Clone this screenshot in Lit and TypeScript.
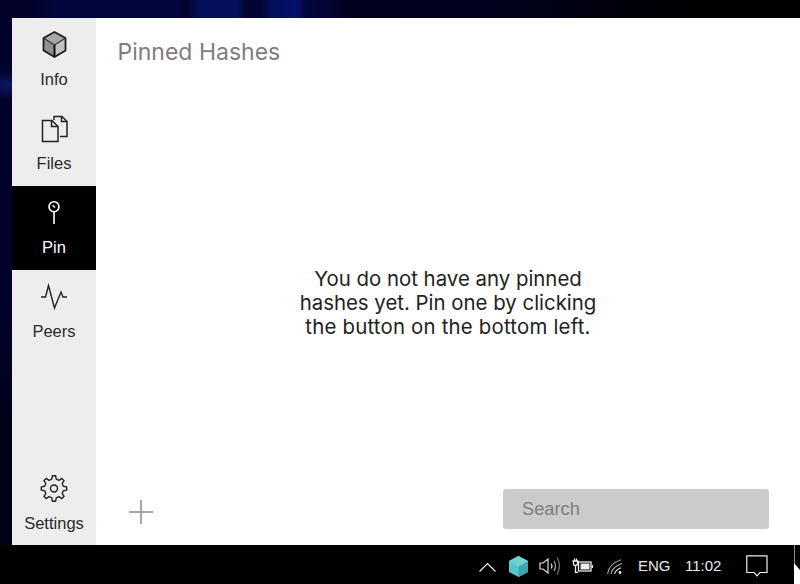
import { LitElement, html, css, svg } from "lit";
import { customElement } from "lit/decorators.js";

function gearPath(cx: number, cy: number, outer: number, inner: number, teeth: number) {
  const pts: string[] = [];
  const step = (Math.PI * 2) / teeth;
  for (let i = 0; i < teeth; i++) {
    const a = i * step - Math.PI / 2;
    const at = (r: number, t: number) => {
      const th = a + t * step;
      return `${(cx + r * Math.cos(th)).toFixed(2)} ${(cy + r * Math.sin(th)).toFixed(2)}`;
    };
    pts.push(at(inner, -0.3), at(outer, -0.16), at(outer, 0.16), at(inner, 0.3));
  }
  return "M" + pts.join("L") + "Z";
}

const icons = {
  info: svg`<svg class="ico" viewBox="0 0 28 28" width="28" height="28"><path d="M14.5 1 25.5 7V19.5L14.5 26 3.5 19.5V7Z" fill="#a8a8a8"/><path d="M14.5 14 3.5 7V19.5L14.5 26Z" fill="#8f8f8f"/><path d="M14.5 14 25.5 7V19.5L14.5 26Z" fill="#c2c2c2"/><path d="M14.5 1 25.5 7V19.5L14.5 26 3.5 19.5V7Z" fill="none" stroke="#1c1c1c" stroke-width="1.8" stroke-linejoin="round"/><path d="M3.5 7 14.5 14 25.5 7" fill="none" stroke="#333" stroke-width="1.2"/><path d="M14.5 14V26" fill="none" stroke="#111" stroke-width="2"/></svg>`,
  files: svg`<svg class="ico" viewBox="0 0 28 28" width="28" height="28" fill="none" stroke="#222" stroke-width="1.5"><path d="M2.5 5.5H12L18 11.5V26.5H2.5Z"/><path d="M11.5 5.5V11.5H18"/><path d="M14 5V1.5H22L27 6.5V21.5H20"/><path d="M21.5 1.5V6.5H27"/></svg>`,
  pin: svg`<svg class="ico" viewBox="0 0 28 28" width="28" height="28" fill="none" stroke="#fff" stroke-width="1.6"><circle cx="14" cy="7.7" r="5"/><path d="M14 12.7V25"/><path d="M12.6 6.2 15 8.5" stroke-width="1.4"/></svg>`,
  peers: svg`<svg class="ico" viewBox="0 0 28 28" width="28" height="28" fill="none" stroke="#222" stroke-width="1.4"><path d="M1 14H5.5L8.5 2.5 14.5 25 21 9 23 14H27"/></svg>`,
  settings: svg`<svg class="ico" viewBox="0 0 28 28" width="28" height="28" fill="none" stroke="#222" stroke-width="1.4" stroke-linejoin="round"><circle cx="14" cy="14.5" r="3.5"/><path d="${gearPath(14, 14.5, 12.8, 9.6, 8)}"/></svg>`,
};

@customElement("app-root")
export class AppRoot extends LitElement {
  static styles = css`
    :host { display: block; width: 800px; height: 584px; overflow: hidden; position: relative;
      background:
        radial-gradient(ellipse 30px 16px at 6px 85px, #0a1660 0, transparent 100%),
        linear-gradient(180deg, transparent 0, transparent 300px, #01011a 420px),
        linear-gradient(90deg, #02022a 0, #02022c 33px, #03063c 60px, #03063c 178px, #01022a 186px, #050e58 200px, #050e5c 238px, #02052e 245px, #020636 262px, #040d5e 272px, #051068 298px, #030640 305px, #030436 328px, #01011e 345px, #01011a 520px, #000 720px); }
    * { box-sizing: border-box; }
    .page { display: flex; flex-direction: column; height: 100%; padding-top: 18px; }
    .window { display: flex; flex: none; height: 527px; margin-left: 12px; background: #fff; }
    .side { width: 84px; flex: none; background: #ededed; display: flex; flex-direction: column; }
    .item { height: 84px; display: flex; flex-direction: column; align-items: center; color: #2a2a2a;
      font: 16.5px "Liberation Sans", Arial, sans-serif; padding-top: 13px; }
    .item .ico { display: block; }
    .item span { margin-top: 10px; line-height: 21px; }
    .item:last-child span { margin-top: 11px; }
    .item.active { background: #000; color: #fff; }
    .spacer { flex: 1; }
    .main { flex: 1; display: flex; flex-direction: column; min-width: 0; }
    h1 { margin: 0; padding: 21px 0 0 21.5px; height: 70px; font: 400 23px/27px Inter, sans-serif; color: #7d7d7d; }
    .empty { flex: 1; display: flex; align-items: center; justify-content: center; text-align: center;
      font: 20.4px/24px Inter, sans-serif; color: #222; padding-top: 29px; }
    .empty p { margin: 0; }
    .empty span { display: block; }
    .empty .wide { letter-spacing: 0.2px; }
    .bottom { display: flex; align-items: flex-start; justify-content: space-between; height: 56px; padding: 0 31px 0 33px; }
    .add { width: 24px; height: 24px; display: block; margin-top: 11px; }
    .search { width: 266px; height: 40px; border-radius: 3px; background: #cbcbcb; color: #7d7d7d;
      font: 18.3px/40px "Liberation Sans", Arial, sans-serif; padding-left: 19px; }
    .bar { flex: 1; background: #000; display: flex; align-items: center; color: #e8e8e8;
      font: 15px "Liberation Sans", Arial, sans-serif; padding-left: 479px; }
    .bar svg { display: block; flex: none; }
    .bar span { flex: none; padding-top: 2px; }
    .up { margin: 4px 13px 0 0; }
    .cube { margin: 3px 11px 0 0; }
    .vol { margin: 3px 11px 0 0; }
    .bat { margin: 2px 14px 0 0; }
    .wifi { margin: 4px 15px 0 0; }
    .lang { width: 47px; }
    .time { width: 61px; }
    .note { margin-top: 2px; }
    .cursor { position: absolute; right: 0; bottom: 0; }
    .edge { position: absolute; left: 794px; top: 545px; width: 1px; height: 20px; background: #8a8a8a; }
  `;

  private item(icon: unknown, label: string, active = false) {
    return html`<div class="item ${active ? "active" : ""}">${icon}<span>${label}</span></div>`;
  }

  render() {
    return html`<div class="page">
      <div class="window">
        <nav class="side">
          ${this.item(icons.info, "Info")}
          ${this.item(icons.files, "Files")}
          ${this.item(icons.pin, "Pin", true)}
          ${this.item(icons.peers, "Peers")}
          <div class="spacer"></div>
          ${this.item(icons.settings, "Settings")}
        </nav>
        <section class="main">
          <h1>Pinned Hashes</h1>
          <div class="empty"><p><span>You do not have any pinned</span><span>hashes yet. Pin one by clicking</span><span class="wide">the button on the bottom left.</span></p></div>
          <div class="bottom">
            <svg class="add" viewBox="0 0 24 24"><path d="M0 12H24M12 0V24" stroke="#8c8c8c" stroke-width="1.5" fill="none"/></svg>
            <div class="search">Search</div>
          </div>
        </section>
      </div>
      <footer class="bar">
        <svg class="up" width="17" height="10" viewBox="0 0 17 10" fill="none" stroke="#eee" stroke-width="1.2"><path d="M.5 9.5 8.5 1.5 16.5 9.5"/></svg>
        <svg class="cube" width="19" height="21" viewBox="0 0 19 21"><path d="M9.5 0 19 5V16L9.5 21 0 16V5Z" fill="#57c6c9"/><path d="M9.5 10.5 19 5V16L9.5 21Z" fill="#3fa6ac"/><path d="M9.5 0 19 5 9.5 10.5 0 5Z" fill="#6fd3d6"/></svg>
        <svg class="vol" width="22" height="20" viewBox="0 0 22 20" fill="none" stroke="#ddd" stroke-width="1.2"><path d="M1 7H4L9 3V17L4 13H1Z"/><path d="M12 7.5Q14 10 12 12.5"/><path d="M15 5Q18 10 15 15" stroke="#aaa"/><path d="M18 1.5Q23 10 18 18.5" stroke="#777"/></svg>
        <svg class="bat" width="21" height="15" viewBox="0 0 21 15" fill="none" stroke="#eee" stroke-width="1.3"><path d="M.5 3H6.5M1.5 3V5.5Q1.5 7.5 3.5 7.5 5.5 7.5 5.5 5.5V3M2.5 .5V3M4.5 .5V3M3.5 7.5V14.5H6"/><rect x="6.5" y="4" width="12.5" height="9"/><rect x="8.5" y="5.5" width="9" height="6" fill="#eee" stroke="none"/><path d="M20.3 7V10"/></svg>
        <svg class="wifi" width="16" height="15" viewBox="0 0 16 15" fill="none" stroke="#999" stroke-width="1.1"><path d="M.5 15Q2 5 14 .8"/><path d="M4 15Q5 8 15 4.5" stroke="#aaa"/><path d="M7.5 15Q8.5 11 14 8.8" stroke="#ddd"/><circle cx="13" cy="13.5" r="1.4" fill="#eee" stroke="none"/></svg>
        <span class="lang">ENG</span>
        <span class="time">11:02</span>
        <svg class="note" width="22" height="22" viewBox="0 0 22 22" fill="none" stroke="#eee" stroke-width="1.2"><path d="M.8 .8H21V17.5H14L11 20.8 8 17.5H.8Z"/></svg>
      </footer>
      <div class="edge"></div>
      <svg class="cursor" width="6" height="21" viewBox="0 0 6 21"><path d="M0 0 6 7V21H0Z" fill="#fff"/></svg>
    </div>`;
  }
}
